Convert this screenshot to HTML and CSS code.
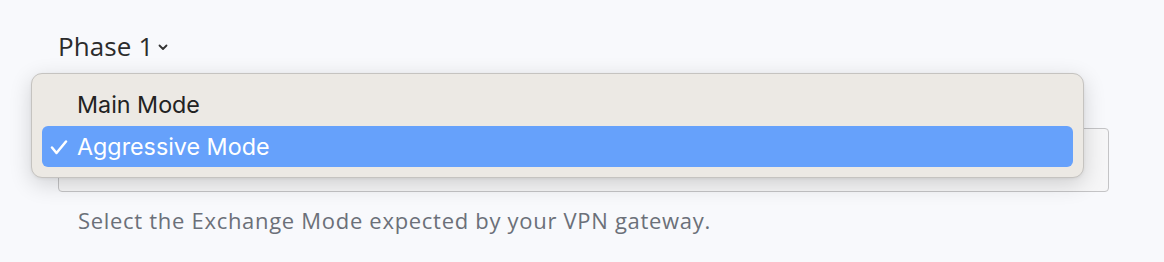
FILE: index.html
```html
<!DOCTYPE html>
<html>
<head>
<meta charset="utf-8">
<link rel="stylesheet" href="styles.css">
</head>
<body>
<div class="field">
  <div class="label">Phase 1 <svg class="chev" width="10" height="7" viewBox="0 0 10 7"><path d="M1.5 1.5 L5 5 L8.5 1.5" fill="none" stroke="#333" stroke-width="1.8" stroke-linecap="round" stroke-linejoin="round"/></svg></div>
  <div class="select-wrap">
    <div class="select"></div>
    <div class="menu">
      <div class="item"><span class="check"></span><span>Main Mode</span></div>
      <div class="item selected"><span class="check"><svg width="18" height="15" viewBox="0 0 18 15"><path d="M2 7.5 L6.5 13 L16 1.5" fill="none" stroke="#fff" stroke-width="2.5" stroke-linecap="round" stroke-linejoin="round"/></svg></span><span>Aggressive Mode</span></div>
    </div>
  </div>
  <div class="help">Select the Exchange Mode expected by your VPN gateway.</div>
</div>
</body>
</html>
```
FILE: styles.css
```css
html, body { margin: 0; padding: 0; }
body {
  background: #f8f9fc;
  width: 1164px;
  height: 262px;
  overflow: hidden;
  font-family: "Open Sans", "Noto Sans", sans-serif;
}
.field {
  padding: 31px 55px 0 58px;
}
.label {
  display: flex;
  align-items: center;
  gap: 5px;
  font-size: 26px;
  font-weight: 500;
  letter-spacing: 0.1px;
  line-height: 30px;
  color: #2c2c2c;
  height: 30px;
}
.chev { margin-top: 2px; }
.select-wrap {
  position: relative;
  margin-top: 67px;
}
.select {
  height: 62px;
  border: 1px solid #c4c4c6;
  border-radius: 4px;
  background: #f6f6f7;
}
.menu {
  position: absolute;
  left: -27px;
  top: -55px;
  width: 1031px;
  padding: 10px 10px 10px 10px;
  background: #ece9e4;
  border: 1px solid #c5c3c0;
  border-radius: 11px;
  box-shadow: 0 6px 22px rgba(0,0,0,0.16), 0 1px 3px rgba(0,0,0,0.06);
  display: flex;
  flex-direction: column;
  gap: 1px;
  font-family: "Inter", "Liberation Sans", sans-serif;
}
.item {
  height: 41px;
  display: flex;
  align-items: center;
  font-size: 23.3px;
  color: #222;
  border-radius: 6px;
}
.item .check {
  width: 35px;
  display: flex;
  justify-content: flex-end;
  box-sizing: border-box;
}
.check svg { margin-right: 9px; margin-top: 2px; }
.item.selected {
  background: #66a1fb;
  color: #fff;
}
.help {
  margin-top: 15px;
  padding-left: 20px;
  font-size: 22px;
  letter-spacing: 0.7px;
  line-height: 26px;
  color: #6b7079;
}
```
